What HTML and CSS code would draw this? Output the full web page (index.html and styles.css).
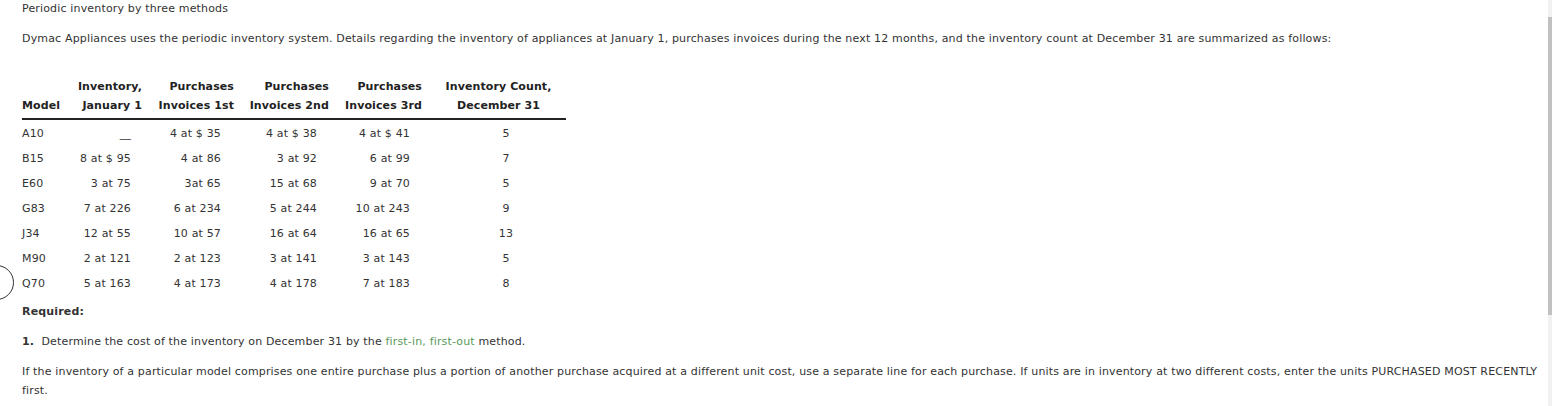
FILE: index.html
```html
<!DOCTYPE html>
<html>
<head>
<meta charset="utf-8">
<link rel="stylesheet" href="styles.css">
</head>
<body>
<div class="page">
  <div class="content">
    <p class="title">Periodic inventory by three methods</p>
    <p class="intro">Dymac Appliances uses the periodic inventory system. Details regarding the inventory of appliances at January 1, purchases invoices during the next 12 months, and the inventory count at December 31 are summarized as follows:</p>
    <table class="inv">
      <colgroup>
        <col class="w1"><col class="w2"><col class="w3"><col class="w4"><col class="w5"><col class="w6">
      </colgroup>
      <thead>
        <tr>
          <th class="c1">Model</th>
          <th class="c2">Inventory,<br>January 1</th>
          <th class="c3">Purchases<br>Invoices 1st</th>
          <th class="c4">Purchases<br>Invoices 2nd</th>
          <th class="c5">Purchases<br>Invoices 3rd</th>
          <th class="c6">Inventory Count,<br>December 31</th>
        </tr>
      </thead>
      <tbody>
        <tr><td class="c1">A10</td><td class="c2">__</td><td class="c3">4 at $ 35</td><td class="c4">4 at $ 38</td><td class="c5">4 at $ 41</td><td class="c6">5</td></tr>
        <tr><td class="c1">B15</td><td class="c2">8 at $ 95</td><td class="c3">4 at 86</td><td class="c4">3 at 92</td><td class="c5">6 at 99</td><td class="c6">7</td></tr>
        <tr><td class="c1">E60</td><td class="c2">3 at 75</td><td class="c3">3at 65</td><td class="c4">15 at 68</td><td class="c5">9 at 70</td><td class="c6">5</td></tr>
        <tr><td class="c1">G83</td><td class="c2">7 at 226</td><td class="c3">6 at 234</td><td class="c4">5 at 244</td><td class="c5">10 at 243</td><td class="c6">9</td></tr>
        <tr><td class="c1">J34</td><td class="c2">12 at 55</td><td class="c3">10 at 57</td><td class="c4">16 at 64</td><td class="c5">16 at 65</td><td class="c6">13</td></tr>
        <tr><td class="c1">M90</td><td class="c2">2 at 121</td><td class="c3">2 at 123</td><td class="c4">3 at 141</td><td class="c5">3 at 143</td><td class="c6">5</td></tr>
        <tr><td class="c1">Q70</td><td class="c2">5 at 163</td><td class="c3">4 at 173</td><td class="c4">4 at 178</td><td class="c5">7 at 183</td><td class="c6">8</td></tr>
      </tbody>
    </table>
    <p class="req">Required:</p>
    <p class="step"><b>1.</b>&nbsp; Determine the cost of the inventory on December 31 by the <span class="term">first-in, first-out</span> method.</p>
    <p class="note">If the inventory of a particular model comprises one entire purchase plus a portion of another purchase acquired at a different unit cost, use a separate line for each purchase. If units are in inventory at two different costs, enter the units PURCHASED MOST RECENTLY first.</p>
  </div>
  <div class="scrollbar"><div class="thumb"></div></div>
  <div class="ring"></div>
</div>
</body>
</html>
```

FILE: styles.css
```css
html, body {
  margin: 0;
  padding: 0;
  background: #ffffff;
}

body {
  font-family: "DejaVu Sans", Verdana, sans-serif;
  font-size: 11px;
  letter-spacing: 0.16px;
  color: #333333;
}

.page {
  position: relative;
  display: flex;
  width: 1552px;
  height: 406px;
  overflow: hidden;
}

.content {
  flex: 1;
  padding-left: 22px;
  padding-right: 4px;
}

p {
  margin: 0;
  line-height: 19px;
}

.title {
  line-height: 17px;
}

.intro {
  margin-top: 12px;
}

.inv {
  margin-top: 29px;
  border-collapse: collapse;
  width: 544px;
  table-layout: fixed;
}

.w1 { width: 50px; }
.w2 { width: 74px; }
.w3 { width: 92px; }
.w4 { width: 95px; }
.w5 { width: 93px; }
.w6 { width: 140px; }

.inv th {
  font-weight: bold;
  letter-spacing: 0.1px;
  color: #222222;
  line-height: 19px;
  padding: 0 0 3px 0;
  border-bottom: 2px solid #222222;
  vertical-align: bottom;
  text-align: right;
  white-space: nowrap;
}

.inv td {
  height: 23px;
  padding: 2px 0 0 0;
  line-height: 19px;
  text-align: right;
  vertical-align: middle;
  white-space: nowrap;
}

.inv .c1 { text-align: left; }
.inv .c6 { text-align: center; }

.inv th.c2, .inv th.c3, .inv th.c4, .inv th.c5 { padding-right: 4px; }
.inv th.c6 { padding-left: 5px; }
.inv td.c2 { padding-right: 15px; }
.inv td.c3 { padding-right: 17px; }
.inv td.c4 { padding-right: 16px; }
.inv td.c5 { padding-right: 16px; }
.inv td.c6 { padding-left: 20px; }

.req {
  margin-top: 7px;
  font-weight: bold;
}

.step {
  margin-top: 11px;
}

.term {
  color: #5a9a5a;
}

.note {
  margin-top: 11px;
}

.scrollbar {
  width: 4px;
  background: #f1f1f1;
  flex: none;
}

.thumb {
  margin-top: 17px;
  height: 298px;
  background: #c1c1c1;
}

.ring {
  position: absolute;
  left: -21px;
  top: 265px;
  width: 33px;
  height: 33px;
  border: 1.5px solid #333333;
  border-radius: 50%;
}
```
